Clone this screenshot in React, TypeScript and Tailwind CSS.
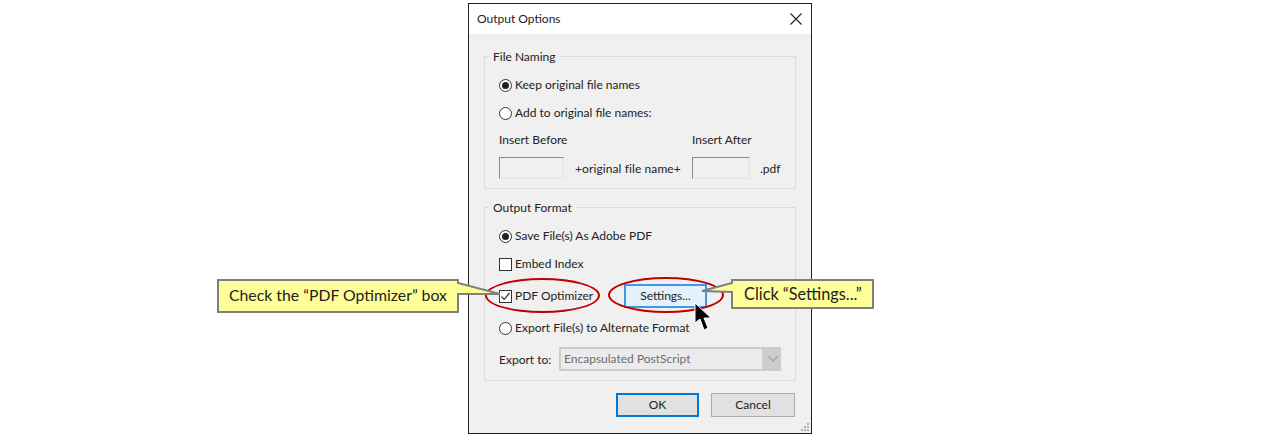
const font = "font-['Lato','Noto_Sans',sans-serif]";

const Radio = ({ on }: { on?: boolean }) => (
  <span className="w-[13px] h-[13px] rounded-full border border-[#333] bg-white flex items-center justify-center shrink-0">
    {on && <span className="w-[7px] h-[7px] rounded-full bg-[#222]"></span>}
  </span>
);

const Check = ({ on }: { on?: boolean }) => (
  <span className="w-[13px] h-[13px] border border-[#333] bg-white flex items-center justify-center shrink-0">
    {on && (
      <svg width="11" height="11" viewBox="0 0 11 11" fill="none" stroke="#333" strokeWidth="1.2">
        <path d="M1.5 5.5 L4.2 8.3 L9.5 2" />
      </svg>
    )}
  </span>
);

const Group = ({ title, className, children }: { title: string; className: string; children: React.ReactNode }) => (
  <fieldset className={`border border-[#dcdcdc] pl-[14px] ${className}`}>
    <legend className="-ml-[10px] px-[4px] leading-[16px] text-[12px] text-[#222] translate-y-[1px]">{title}</legend>
    {children}
  </fieldset>
);

const Callout = ({ className, path, w, textClass, text }: { className: string; path: string; w: number; textClass: string; text: string }) => (
  <div className={`absolute ${className}`}>
    <svg width={w} height="40" viewBox={`0 0 ${w} 40`}>
      <path d={path} fill="#ffff99" stroke="#7f7f7f" strokeWidth="2" />
    </svg>
    <span className={`absolute top-[10px] leading-[20px] text-[#222] whitespace-nowrap ${textClass}`}>{text}</span>
  </div>
);

export default function App() {
  return (
    <div className={`relative w-[1280px] h-[443px] bg-white overflow-hidden ${font}`}>
      <div className="flex justify-center pt-[3px] pl-[0px]">
        {/* dialog */}
        <div className="relative w-[344px] h-[431px] border border-[#222] bg-[#f0f0f0] flex flex-col">
          <div className="h-[30px] bg-white flex items-center justify-between pl-[8px] pr-[9px] text-[12px] text-[#222]">
            <span>Output Options</span>
            <svg width="12" height="12" viewBox="0 0 12 12" stroke="#222" strokeWidth="1.1">
              <path d="M0.5 0.5 L11.5 11.5 M11.5 0.5 L0.5 11.5" />
            </svg>
          </div>
          <div className="flex flex-col px-[15px] text-[12px] text-[#222]">
            <Group title="File Naming" className="mt-[14px] h-[141px]">
              <div className="flex items-center gap-[3px] h-[16px] mt-[13px]"><Radio on /><span>Keep original file names</span></div>
              <div className="flex items-center gap-[3px] h-[16px] mt-[12px]"><Radio /><span>Add to original file names:</span></div>
              <div className="flex h-[16px] mt-[10px]">
                <span className="w-[193px]">Insert Before</span>
                <span>Insert After</span>
              </div>
              <div className="flex items-center h-[22px] mt-[10px]">
                <span className="w-[65px] h-[22px] border border-[#e3e3e3] border-t-[#8a8a8a] border-l-[#8a8a8a]"></span>
                <span className="ml-[11px] w-[117px] pt-[2px] tracking-[0.1px]">+original file name+</span>
                <span className="w-[58px] h-[22px] border border-[#e3e3e3] border-t-[#8a8a8a] border-l-[#8a8a8a]"></span>
                <span className="ml-[10px] pt-[2px]">.pdf</span>
              </div>
            </Group>
            <Group title="Output Format" className="mt-[10px] h-[182px]">
              <div className="flex items-center gap-[3px] h-[16px] mt-[13px]"><Radio on /><span>Save File(s) As Adobe PDF</span></div>
              <div className="flex items-center gap-[3px] h-[16px] mt-[12px]"><Check /><span>Embed Index</span></div>
              <div className="flex items-center h-[24px] mt-[12px]">
                <div className="flex items-center gap-[3px] w-[125px]"><Check on /><span>PDF Optimizer</span></div>
                <button className="w-[83px] h-[24px] border-2 border-[#3c9ae6] bg-[#e5f1fb] text-[12px] text-[#222]">Settings...</button>
              </div>
              <div className="flex items-center gap-[3px] h-[16px] mt-[12px]"><Radio /><span>Export File(s) to Alternate Format</span></div>
              <div className="flex items-center h-[24px] mt-[11px]">
                <span className="w-[60px] pt-[1px]">Export to:</span>
                <div className="w-[222px] h-[24px] bg-[#cccccc] flex items-center pl-[2px]">
                  <span className="w-[201px] h-[20px] bg-[#ebebeb] pl-[3px] leading-[20px] text-[#6d6d6d]">Encapsulated PostScript</span>
                  <svg className="ml-[6px]" width="10" height="6" viewBox="0 0 10 6" fill="none" stroke="#a0a0a0" strokeWidth="1.2">
                    <path d="M0.5 0.5 L5 5 L9.5 0.5" />
                  </svg>
                </div>
              </div>
            </Group>
            <div className="flex justify-end gap-[12px] mt-[12px] pr-[1px] text-[12px]">
              <button className="w-[83px] h-[24px] border-2 border-[#0078d7] bg-[#e1e1e1] text-[#222]">OK</button>
              <button className="w-[84px] h-[24px] border border-[#adadad] bg-[#e1e1e1] text-[#222]">Cancel</button>
            </div>
          </div>
          {/* resize grip */}
          <svg className="absolute right-[1px] bottom-[1px]" width="10" height="10" viewBox="0 0 10 10" fill="#b0b0b0">
            <rect x="7" y="1" width="2" height="2" /><rect x="4" y="4" width="2" height="2" /><rect x="7" y="4" width="2" height="2" />
            <rect x="1" y="7" width="2" height="2" /><rect x="4" y="7" width="2" height="2" /><rect x="7" y="7" width="2" height="2" />
          </svg>
        </div>
      </div>

      {/* annotations */}
      <div className="absolute left-[485px] top-[278px] w-[115px] h-[35px] rounded-[50%] border-2 border-[#c00000]"></div>
      <div className="absolute left-[608px] top-[277px] w-[116px] h-[36px] rounded-[50%] border-2 border-[#c00000]"></div>
      <Callout
        className="left-[217px] top-[275px]"
        w={290}
        path="M1 5 H241 L241 8 L283 19 L241 19 V37 H1 Z"
        textClass="left-[12px] text-[15.8px]"
        text="Check the “PDF Optimizer” box"
      />
      <Callout
        className="left-[700px] top-[275px]"
        w={176}
        path="M32 5 H173 V33 H32 V17 L2 16 L32 8 Z"
        textClass="left-[44px] -mt-[1px] text-[16.3px]"
        text="Click “Settings...”"
      />
      <svg className="absolute left-[692px] top-[301px]" width="22" height="32" viewBox="0 0 22 32">
        <path d="M3 2 L3 22 L8 18 L12 29 L16 27 L12 17 L19 17 Z" fill="#000" stroke="#fff" strokeWidth="1" />
      </svg>
    </div>
  );
}
